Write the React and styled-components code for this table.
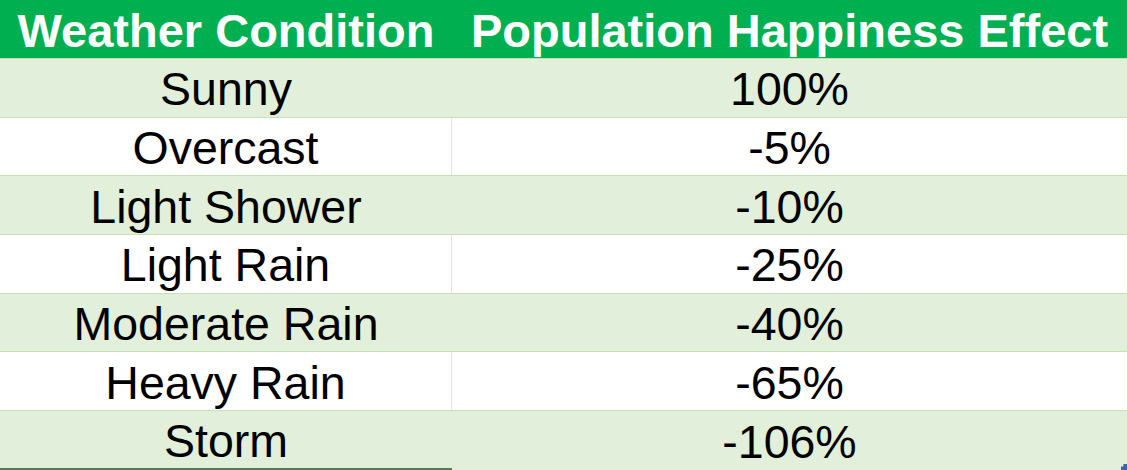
import React from 'react';
import styled, { createGlobalStyle } from 'styled-components';

const GlobalStyle = createGlobalStyle`
  html, body {
    margin: 0;
    padding: 0;
    background: #ffffff;
  }
  body {
    font-family: "Liberation Sans", Arial, sans-serif;
  }
`;

const Sheet = styled.div`
  position: relative;
  width: 1128px;
  height: 470px;
  display: grid;
  grid-template-rows: 58px repeat(7, 1fr);
  box-sizing: border-box;
  border-right: 1px solid #c9dfbd;
  overflow: hidden;
`;

const Row = styled.div`
  display: grid;
  grid-template-columns: 452px 1fr;
  background: ${({ $head, $shaded }) =>
    $head ? '#00b050' : $shaded ? '#e2efda' : '#ffffff'};
  border-top: ${({ $head }) => ($head ? 'none' : '1px solid #c6e0b4')};
  box-sizing: border-box;
`;

const Cell = styled.div`
  display: flex;
  align-items: center;
  justify-content: center;
  box-sizing: border-box;
  white-space: nowrap;
  font-size: ${({ $head }) => ($head ? '47px' : '46.5px')};
  font-weight: ${({ $head }) => ($head ? 700 : 400)};
  color: ${({ $head }) => ($head ? '#ffffff' : '#000000')};
  padding-top: ${({ $head }) => ($head ? '2px' : '3px')};
  border-right: ${({ $divider }) => ($divider ? '1px solid #e3e3e3' : 'none')};
  border-bottom: ${({ $marked }) => ($marked ? '2px solid #557a58' : 'none')};
`;

// little blue fill handle in the bottom right corner
const Handle = styled.div`
  position: absolute;
  right: 0;
  bottom: 0;
  width: 6px;
  height: 6px;
  background: #3e5fb4;
  clip-path: polygon(100% 0, 100% 100%, 0 100%, 0 40%, 40% 40%, 40% 0);
`;

const rows = [
  { condition: 'Sunny', effect: '100%' },
  { condition: 'Overcast', effect: '-5%' },
  { condition: 'Light Shower', effect: '-10%' },
  { condition: 'Light Rain', effect: '-25%' },
  { condition: 'Moderate Rain', effect: '-40%' },
  { condition: 'Heavy Rain', effect: '-65%' },
  { condition: 'Storm', effect: '-106%' },
];

const App = () => {
  return (
    <>
      <GlobalStyle />
      <Sheet>
        <Row $head>
          <Cell $head>Weather Condition</Cell>
          <Cell $head>Population Happiness Effect</Cell>
        </Row>
        {rows.map((r, i) => {
          const shaded = i % 2 === 0;
          const last = i === rows.length - 1;
          return (
            <Row key={r.condition} $shaded={shaded}>
              <Cell $divider={!shaded} $marked={last}>{r.condition}</Cell>
              <Cell>{r.effect}</Cell>
            </Row>
          );
        })}
        <Handle />
      </Sheet>
    </>
  );
};

export default App;
